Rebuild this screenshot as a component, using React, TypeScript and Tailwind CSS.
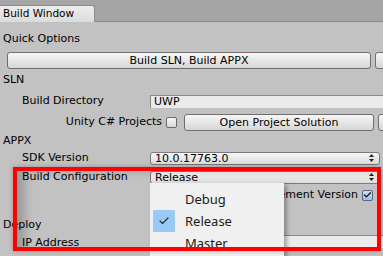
import { Check } from "lucide-react";

const Arrows = () => (
  <svg width="5" height="8" viewBox="0 0 5 8" className="shrink-0">
    <path d="M2.5 0 L5 3 L0 3 Z" fill="#222" />
    <path d="M2.5 8 L5 5 L0 5 Z" fill="#222" />
  </svg>
);

const Popup = ({ value }: { value: string }) => (
  <div className="flex items-center justify-between w-[230px] h-[13px] pl-[4px] pr-[5px] rounded-[3px] border border-[#7a7a7a] bg-gradient-to-b from-[#f6f6f6] to-[#dcdcdc]">
    <span className="leading-none">{value}</span>
    <Arrows />
  </div>
);

const Field = ({ value }: { value: string }) => (
  <div className="flex items-center w-[260px] h-[13px] pl-[3px] border-t border-l border-[#8a8a8a] bg-[#ebebeb]">
    <span className="leading-none">{value}</span>
  </div>
);

const Button = ({ label, width }: { label: string; width: string }) => (
  <div
    className={`${width} h-[17px] shrink-0 flex items-center justify-center rounded-[3px] border border-[#6f6f6f] bg-gradient-to-b from-[#f7f7f7] to-[#d6d6d6]`}
  >
    <span className="leading-none">{label}</span>
  </div>
);

export default function App() {
  return (
    <div
      className="relative w-[383px] h-[256px] overflow-hidden bg-[#c2c2c2] text-[11px] text-black"
      style={{ fontFamily: '"DejaVu Sans", Verdana, sans-serif' }}
    >
      {/* tab bar */}
      <div className="h-[22px] flex items-end bg-[#a5a5a5] border-b border-[#8c8c8c]">
        <div className="w-[95px] h-[17px] -mb-px flex items-center pl-[3px] text-[10.5px] rounded-tr-[3px] border-t border-r border-[#8c8c8c] bg-gradient-to-b from-[#ececec] to-[#dcdcdc]">
          Build Window
        </div>
      </div>

      <div className="flex flex-col pt-[8px] w-[420px]">
        <div className="h-[18px] flex items-center pl-[3px]">Quick Options</div>
        <div className="h-[24px] flex items-start pt-[4px] pl-[7px] gap-[4px]">
          <Button label="Build SLN, Build APPX" width="w-[364px]" />
          <Button label="" width="w-[40px]" />
        </div>
        <div className="h-[16px] flex items-center pl-[3px]">SLN</div>
        <div className="h-[26px] flex items-center">
          <div className="w-[150px] pl-[22px]">Build Directory</div>
          <Field value="UWP" />
        </div>
        <div className="h-[17px] flex items-center">
          <div className="w-[162px] text-right">Unity C# Projects</div>
          <div className="ml-[4px] w-[11px] h-[11px] rounded-[2px] border border-[#6a6a6a] bg-gradient-to-b from-[#f5f5f5] to-[#d8d8d8]" />
          <div className="ml-[7px] flex gap-[4px]">
            <Button label="Open Project Solution" width="w-[190px]" />
            <Button label="" width="w-[40px]" />
          </div>
        </div>
        <div className="h-[20px] flex items-center pl-[3px]">APPX</div>
        <div className="h-[14px] flex items-center">
          <div className="w-[150px] pl-[22px]">SDK Version</div>
          <Popup value="10.0.17763.0" />
        </div>
        <div className="h-[24px] flex items-center">
          <div className="w-[150px] pl-[22px]">Build Configuration</div>
          <Popup value="Release" />
        </div>
        <div className="h-[12px] flex items-center">
          <div className="w-[358px] text-right">Increment Version</div>
          <div className="ml-[4px] w-[11px] h-[11px] flex items-center justify-center rounded-[2px] border border-[#4d6a8a] bg-gradient-to-b from-[#cfe1f3] to-[#9fbfdf]">
            <Check size={10} strokeWidth={3.5} color="#111" />
          </div>
        </div>
        <div className="h-[15px]" />
        <div className="h-[18px] flex items-center pl-[3px]">Deploy</div>
        <div className="h-[18px] flex items-start">
          <div className="w-[150px] pl-[22px] leading-[18px]">IP Address</div>
          <div className="pt-[1px]">
            <Field value="" />
          </div>
        </div>
      </div>

      {/* open popup menu */}
      <div
        className="absolute left-[150px] top-[183px] w-[134px] h-[80px] bg-[#f0f0f0] shadow-[3px_2px_4px_rgba(0,0,0,0.3)] flex flex-col pt-[5px] text-[13px] text-[#1a1a1a]"
        style={{ fontFamily: '"Noto Sans", "Liberation Sans", sans-serif' }}
      >
        {["Debug", "Release", "Master"].map((item) => (
          <div key={item} className="h-[22px] flex items-center">
            <div
              className={`ml-[3px] w-[22px] h-[22px] flex items-center justify-center ${
                item === "Release" ? "bg-[#99c9f5]" : ""
              }`}
            >
              {item === "Release" && <Check size={12} strokeWidth={2.5} color="#333" />}
            </div>
            <span className="ml-[10px] leading-none">{item}</span>
          </div>
        ))}
      </div>

      {/* annotation frame */}
      <div className="absolute left-[13px] top-[167px] w-[368px] h-[84px] border-[4px] border-[#ff0000] shadow-[inset_12px_4px_10px_-4px_rgba(0,0,0,0.2),0_0_5px_rgba(0,0,0,0.25)]" />
    </div>
  );
}
